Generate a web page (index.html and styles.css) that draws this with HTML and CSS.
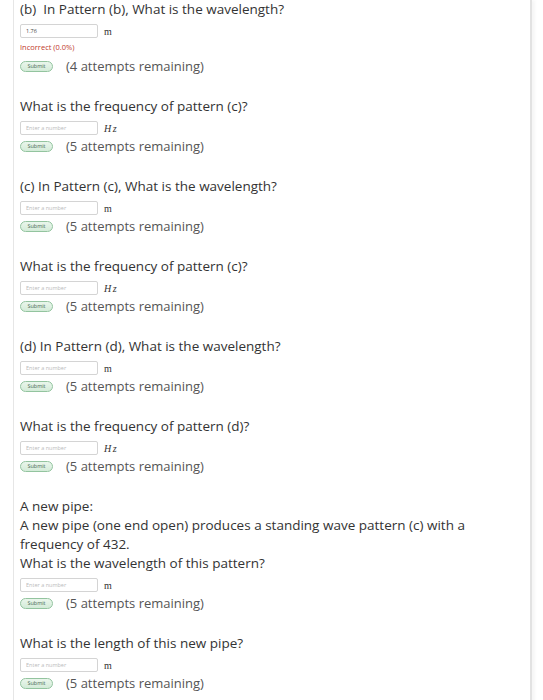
FILE: index.html
```html
<!DOCTYPE html>
<html lang="en">
<head>
    <meta charset="UTF-8">
    <title>Standing waves homework</title>
    <link rel="stylesheet" href="styles.css">
</head>
<body>
    <div class="panel">
        <div class="part">
            <p class="question">(b)&nbsp; In Pattern (b), What is the wavelength?</p>
            <div class="answer">
                <input class="num" type="text" value="1.76">
                <span class="unit">m</span>
            </div>
            <div class="feedback">Incorrect (0.0%)</div>
            <div class="actions">
                <button class="submit">Submit</button>
                <span class="attempts">(4 attempts remaining)</span>
            </div>
        </div>

        <div class="part">
            <p class="question">What is the frequency of pattern (c)?</p>
            <div class="answer">
                <input class="num" type="text" placeholder="Enter a number">
                <span class="unit hz">Hz</span>
            </div>
            <div class="actions">
                <button class="submit">Submit</button>
                <span class="attempts">(5 attempts remaining)</span>
            </div>
        </div>

        <div class="part">
            <p class="question">(c) In Pattern (c), What is the wavelength?</p>
            <div class="answer">
                <input class="num" type="text" placeholder="Enter a number">
                <span class="unit">m</span>
            </div>
            <div class="actions">
                <button class="submit">Submit</button>
                <span class="attempts">(5 attempts remaining)</span>
            </div>
        </div>

        <div class="part">
            <p class="question">What is the frequency of pattern (c)?</p>
            <div class="answer">
                <input class="num" type="text" placeholder="Enter a number">
                <span class="unit hz">Hz</span>
            </div>
            <div class="actions">
                <button class="submit">Submit</button>
                <span class="attempts">(5 attempts remaining)</span>
            </div>
        </div>

        <div class="part">
            <p class="question">(d) In Pattern (d), What is the wavelength?</p>
            <div class="answer">
                <input class="num" type="text" placeholder="Enter a number">
                <span class="unit">m</span>
            </div>
            <div class="actions">
                <button class="submit">Submit</button>
                <span class="attempts">(5 attempts remaining)</span>
            </div>
        </div>

        <div class="part">
            <p class="question">What is the frequency of pattern (d)?</p>
            <div class="answer">
                <input class="num" type="text" placeholder="Enter a number">
                <span class="unit hz">Hz</span>
            </div>
            <div class="actions">
                <button class="submit">Submit</button>
                <span class="attempts">(5 attempts remaining)</span>
            </div>
        </div>

        <div class="part">
            <p class="question">A new pipe:<br>A new pipe (one end open) produces a standing wave pattern (c) with a frequency of 432.<br>What is the wavelength of this pattern?</p>
            <div class="answer">
                <input class="num" type="text" placeholder="Enter a number">
                <span class="unit">m</span>
            </div>
            <div class="actions">
                <button class="submit">Submit</button>
                <span class="attempts">(5 attempts remaining)</span>
            </div>
        </div>

        <div class="part">
            <p class="question">What is the length of this new pipe?</p>
            <div class="answer">
                <input class="num" type="text" placeholder="Enter a number">
                <span class="unit">m</span>
            </div>
            <div class="actions">
                <button class="submit">Submit</button>
                <span class="attempts">(5 attempts remaining)</span>
            </div>
        </div>
    </div>
</body>
</html>
```

FILE: styles.css
```css
html, body {
    margin: 0;
    padding: 0;
    background-color: #fff;
}
body {
    font-family: "Open Sans", "Liberation Sans", sans-serif;
    color: #333;
}
.panel {
    width: 519px;
    margin-left: 13px;
    padding: 0 6px 10px 6px;
    border-left: 1px solid #e6e6e6;
    border-right: 2px solid #e2e2e2;
    box-shadow: 3px 0 3px rgba(0, 0, 0, 0.04);
    min-height: 700px;
    box-sizing: border-box;
}
.part {
    margin-bottom: 23px;
}
.question {
    margin: 0;
    font-size: 13.5px;
    line-height: 19px;
    padding-right: 30px;
}
.answer {
    display: flex;
    align-items: center;
    margin-top: 5px;
    height: 14px;
}
.num {
    width: 78px;
    height: 14px;
    box-sizing: border-box;
    border: 1px solid #d4d4d4;
    border-radius: 2px;
    padding: 0 5px;
    font-family: "Open Sans", sans-serif;
    font-size: 5.5px;
    color: #444;
    outline: none;
}
.num::placeholder {
    color: #bbb;
}
.unit {
    margin-left: 6px;
    font-family: "Liberation Serif", serif;
    font-size: 10px;
    color: #333;
}
.unit.hz {
    font-style: italic;
    letter-spacing: 1.5px;
}
.feedback {
    margin-top: 3px;
    font-size: 7.5px;
    line-height: 12px;
    color: #c0392b;
}
.actions {
    display: flex;
    align-items: center;
    height: 16px;
    margin-top: 3px;
}
.feedback + .actions {
    margin-top: 5px;
}
.submit {
    width: 33px;
    height: 11px;
    padding: 0;
    border: 1px solid #93c49f;
    border-radius: 6px;
    background: linear-gradient(#eaf6ec, #d3ebd8);
    font-family: "Open Sans", sans-serif;
    font-size: 5.5px;
    line-height: 8px;
    color: #4b6b55;
}
.attempts {
    margin-left: 13px;
    font-size: 13px;
    color: #555;
}
```
